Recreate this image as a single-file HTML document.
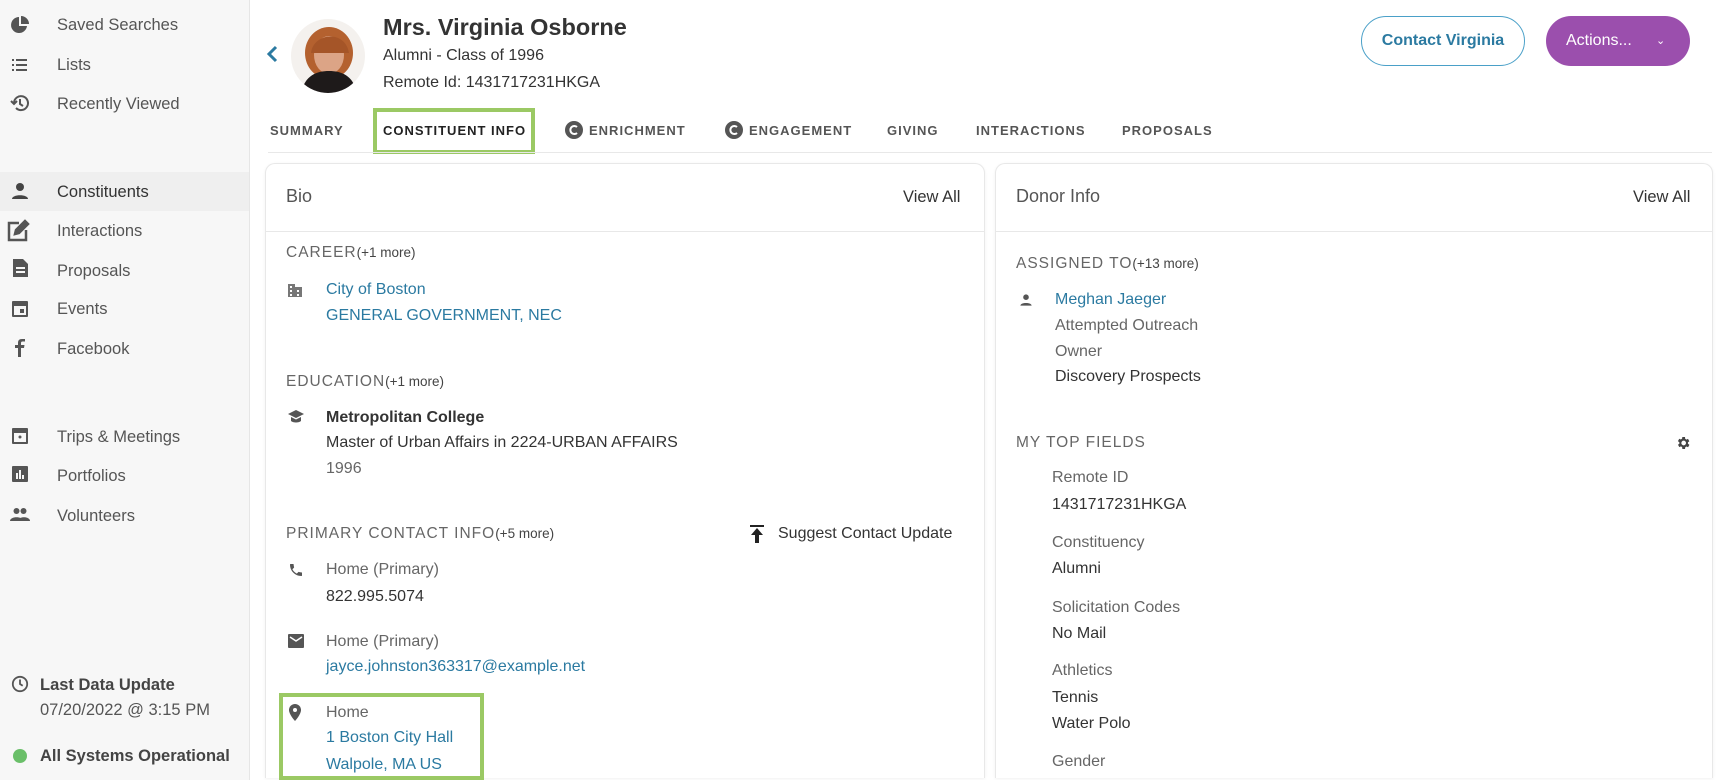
<!DOCTYPE html>
<html><head><meta charset="utf-8"><style>
*{margin:0;padding:0;box-sizing:border-box}
html,body{width:1720px;height:780px;overflow:hidden}
body{background:#fff;font-family:"Liberation Sans",Arial,sans-serif;color:#333;position:relative}
.a{position:absolute;white-space:nowrap;line-height:22px}
.side{position:absolute;left:0;top:0;width:250px;height:780px;background:#f7f7f7;border-right:1px solid #e6e6e6}
.si{font-size:16.5px;color:#555;left:57px}
.ic{position:absolute;left:10px;width:20px;height:20px}
.tab{font-size:13px;font-weight:bold;letter-spacing:1px;color:#555;top:120px}
.card{position:absolute;top:163px;height:615px;background:#fff;border:1px solid #e8e8e8;border-bottom:none;border-radius:10px 10px 0 0;box-shadow:0 1px 3px rgba(0,0,0,.06)}
.ch{position:absolute;left:0;right:0;top:67px;border-top:1px solid #e8e8e8}
.lab{font-size:15.5px;letter-spacing:1px;color:#666}
.lab small{font-size:13.5px;letter-spacing:0;color:#444}
.t{font-size:16px;color:#333}
.g{font-size:16px;color:#666}
.l{font-size:16px;color:#2b7aa1}
.green{position:absolute;border:4px solid #9bc964}
</style></head><body>
<div class="side">
<div style="position:absolute;left:0;top:172px;width:249px;height:39px;background:#efefef"></div>
</div>
<svg class="ic" style="top:15px;left:10px" viewBox="0 0 20 20"><path d="M9 2a8 8 0 1 0 8 9H9z" fill="#555"/><path d="M11 1v8h8a8 8 0 0 0-8-8z" fill="#555"/></svg>
<div class="a si" style="top:14px">Saved Searches</div>
<svg class="ic" style="top:55px" viewBox="0 0 20 20" fill="#555"><rect x="2" y="4" width="2" height="2"/><rect x="2" y="9" width="2" height="2"/><rect x="2" y="14" width="2" height="2"/><rect x="6" y="4" width="11" height="2"/><rect x="6" y="9" width="11" height="2"/><rect x="6" y="14" width="11" height="2"/></svg>
<div class="a si" style="top:54px">Lists</div>
<svg class="ic" style="top:93px" viewBox="0 0 20 20" fill="none" stroke="#555" stroke-width="2"><path d="M4 10a7 7 0 1 1 2 5"/><path d="M10 6v5l3 2"/><path d="M1 8l3 3 3-3"/></svg>
<div class="a si" style="top:93px">Recently Viewed</div>
<svg class="ic" style="top:181px" viewBox="0 0 20 20" fill="#444"><circle cx="10" cy="6" r="4"/><path d="M2 18c0-5 16-5 16 0z"/></svg>
<div class="a si" style="top:181px;color:#333">Constituents</div>
<svg class="ic" style="top:219px;width:24px;height:24px;left:6px" viewBox="0 0 24 24" fill="none" stroke="#555" stroke-width="2.5"><path d="M13 4H3v17h17V11"/><path d="M9 15l1-4 9-9 3 3-9 9z" fill="#555"/></svg>
<div class="a si" style="top:220px">Interactions</div>
<svg class="ic" style="top:258px" viewBox="0 0 20 20"><path d="M3 1h10l5 5v13H3z" fill="#555"/><rect x="6" y="9" width="9" height="2" fill="#f7f7f7"/><rect x="6" y="13" width="9" height="2" fill="#f7f7f7"/></svg>
<div class="a si" style="top:260px">Proposals</div>
<svg class="ic" style="top:298px" viewBox="0 0 20 20"><rect x="2" y="3" width="16" height="16" rx="1" fill="#555"/><rect x="4" y="8" width="12" height="9" fill="#f7f7f7"/><rect x="10" y="11" width="4" height="4" fill="#555"/></svg>
<div class="a si" style="top:298px">Events</div>
<svg class="ic" style="top:337px" viewBox="0 0 20 20"><path d="M11 20V11h3l.5-3H11V6c0-1 .5-1.5 1.5-1.5H15V2h-3c-3 0-4 1.5-4 4V8H5v3h3v9z" fill="#555"/></svg>
<div class="a si" style="top:338px">Facebook</div>
<svg class="ic" style="top:425px" viewBox="0 0 20 20"><rect x="2" y="3" width="16" height="16" rx="1" fill="#555"/><rect x="4" y="8" width="12" height="9" fill="#f7f7f7"/><circle cx="10" cy="12" r="1.5" fill="#555"/></svg>
<div class="a si" style="top:426px">Trips &amp; Meetings</div>
<svg class="ic" style="top:464px" viewBox="0 0 20 20"><rect x="2" y="2" width="16" height="16" rx="1" fill="#555"/><rect x="6" y="9" width="2" height="6" fill="#f7f7f7"/><rect x="9" y="6" width="2" height="9" fill="#f7f7f7"/><rect x="12" y="11" width="2" height="4" fill="#f7f7f7"/></svg>
<div class="a si" style="top:465px">Portfolios</div>
<svg class="ic" style="top:505px" viewBox="0 0 20 20" fill="#555"><circle cx="6.5" cy="6" r="3"/><circle cx="13.5" cy="6" r="3"/><path d="M0 16c0-5 13-5 13 0z"/><path d="M8 16c0-5 12-5 12 0z"/></svg>
<div class="a si" style="top:505px">Volunteers</div>
<svg class="ic" style="top:675px;left:11px;width:18px;height:18px" viewBox="0 0 20 20" fill="none" stroke="#555" stroke-width="2"><circle cx="10" cy="10" r="8"/><path d="M10 5v5l3 2"/></svg>
<div class="a" style="top:674px;left:40px;font-size:16.5px;font-weight:bold;color:#444">Last Data Update</div>
<div class="a" style="top:699px;left:40px;font-size:16.5px;color:#555">07/20/2022 @ 3:15 PM</div>
<div style="position:absolute;left:13px;top:749px;width:14px;height:14px;border-radius:50%;background:#6abf69"></div>
<div class="a" style="top:745px;left:40px;font-size:16.5px;font-weight:bold;color:#444">All Systems Operational</div>

<svg style="position:absolute;left:265px;top:44px" width="14" height="20" viewBox="0 0 14 20"><path d="M11 3L4 10l7 7" fill="none" stroke="#2b7aa1" stroke-width="3"/></svg>
<svg style="position:absolute;left:291px;top:19px" width="74" height="74" viewBox="0 0 74 74"><defs><clipPath id="c"><circle cx="37" cy="37" r="37"/></clipPath></defs><g clip-path="url(#c)"><rect width="74" height="74" fill="#f4f1ee"/><ellipse cx="38" cy="34" rx="24" ry="26" fill="#b4612f"/><ellipse cx="38" cy="36" rx="15" ry="19" fill="#dca486"/><path d="M10 74c4-18 16-22 28-22s24 4 28 22z" fill="#1e1a1a"/><path d="M20 34c2-20 34-24 38 0" fill="#a55528"/></g></svg>
<div class="a" style="top:13px;left:383px;font-size:23.5px;font-weight:bold;color:#333;line-height:28px">Mrs. Virginia Osborne</div>
<div class="a" style="top:45px;left:383px;font-size:16px;color:#333">Alumni - Class of 1996</div>
<div class="a" style="top:72px;left:383px;font-size:16px;color:#333">Remote Id: 1431717231HKGA</div>
<div style="position:absolute;left:1361px;top:16px;width:164px;height:50px;border:1.5px solid #4aa0c8;border-radius:25px;text-align:center;line-height:47px;font-size:16px;font-weight:bold;color:#2b7aa1">Contact Virginia</div>
<div style="position:absolute;left:1546px;top:16px;width:144px;height:50px;background:#9b4fad;border-radius:25px;line-height:50px;font-size:16px;color:#fff;padding-left:20px">Actions...<span style="position:absolute;left:110px;top:0;font-size:11px">&#8964;</span></div>

<div class="a tab" style="left:270px">SUMMARY</div>
<div class="a tab" style="left:383px;color:#222">CONSTITUENT INFO</div>
<div class="green" style="left:373px;top:108px;width:162px;height:46px"></div>
<svg style="position:absolute;left:564px;top:120px" width="20" height="20" viewBox="0 0 20 20"><circle cx="10" cy="10" r="9" fill="#555"/><path d="M13 7a4 4 0 1 0 0 6" fill="none" stroke="#fff" stroke-width="2"/></svg>
<div class="a tab" style="left:589px">ENRICHMENT</div>
<svg style="position:absolute;left:724px;top:120px" width="20" height="20" viewBox="0 0 20 20"><circle cx="10" cy="10" r="9" fill="#555"/><path d="M13 7a4 4 0 1 0 0 6" fill="none" stroke="#fff" stroke-width="2"/></svg>
<div class="a tab" style="left:749px">ENGAGEMENT</div>
<div class="a tab" style="left:887px">GIVING</div>
<div class="a tab" style="left:976px">INTERACTIONS</div>
<div class="a tab" style="left:1122px">PROPOSALS</div>
<div style="position:absolute;left:268px;right:8px;top:152px;border-top:1px solid #e8e8e8"></div>

<div class="card" style="left:265px;width:720px"><div class="ch"></div></div>
<div class="card" style="left:995px;width:718px"><div class="ch"></div></div>
<div class="a" style="top:185px;left:286px;font-size:18px;color:#555">Bio</div>
<div class="a" style="top:186px;left:903px;font-size:16.5px;color:#333">View All</div>
<div class="a" style="top:185px;left:1016px;font-size:18px;color:#555">Donor Info</div>
<div class="a" style="top:186px;left:1633px;font-size:16.5px;color:#333">View All</div>

<div class="a lab" style="top:242px;left:286px">CAREER<small>(+1 more)</small></div>
<svg style="position:absolute;left:287px;top:282px" width="16" height="16" viewBox="0 0 16 16" fill="#777"><path d="M1 2h7v3h7v10H1z"/><g fill="#fff"><rect x="3" y="4" width="2" height="2"/><rect x="3" y="8" width="2" height="2"/><rect x="3" y="12" width="2" height="2"/><rect x="10" y="8" width="2" height="2"/><rect x="10" y="12" width="2" height="2"/></g></svg>
<div class="a l" style="top:279px;left:326px">City of Boston</div>
<div class="a l" style="top:305px;left:326px">GENERAL GOVERNMENT, NEC</div>
<div class="a lab" style="top:371px;left:286px">EDUCATION<small>(+1 more)</small></div>
<svg style="position:absolute;left:287px;top:409px" width="18" height="16" viewBox="0 0 18 16" fill="#555"><path d="M9 1L1 5l8 4 8-4z"/><path d="M4 8v4c2 2 8 2 10 0V8l-5 2.5z"/></svg>
<div class="a t" style="top:407px;left:326px;font-weight:bold">Metropolitan College</div>
<div class="a t" style="top:432px;left:326px">Master of Urban Affairs in 2224-URBAN AFFAIRS</div>
<div class="a g" style="top:458px;left:326px">1996</div>
<div class="a lab" style="top:523px;left:286px">PRIMARY CONTACT INFO<small>(+5 more)</small></div>
<svg style="position:absolute;left:749px;top:524px" width="16" height="20" viewBox="0 0 16 20" fill="#222"><rect x="1" y="1" width="14" height="2"/><path d="M8 4l-6 7h4v8h4v-8h4z"/></svg>
<div class="a t" style="top:523px;left:778px">Suggest Contact Update</div>
<svg style="position:absolute;left:288px;top:562px" width="16" height="16" viewBox="0 0 24 24" fill="#555"><path d="M6.6 10.8c1.4 2.8 3.8 5.1 6.6 6.6l2.2-2.2c.3-.3.7-.4 1-.2 1.1.4 2.3.6 3.6.6.6 0 1 .4 1 1V20c0 .6-.4 1-1 1C10.6 21 3 13.4 3 4c0-.6.4-1 1-1h3.5c.6 0 1 .4 1 1 0 1.3.2 2.5.6 3.6.1.3 0 .7-.2 1z"/></svg>
<div class="a g" style="top:559px;left:326px">Home (Primary)</div>
<div class="a t" style="top:586px;left:326px">822.995.5074</div>
<svg style="position:absolute;left:288px;top:634px" width="16" height="14" viewBox="0 0 16 14"><rect width="16" height="14" rx="1" fill="#555"/><path d="M2 3l6 4 6-4" fill="none" stroke="#fff" stroke-width="1.5"/></svg>
<div class="a g" style="top:631px;left:326px">Home (Primary)</div>
<div class="a l" style="top:656px;left:326px">jayce.johnston363317@example.net</div>
<svg style="position:absolute;left:289px;top:704px" width="12" height="17" viewBox="0 0 12 17"><path d="M6 0a6 6 0 0 0-6 6c0 4.5 6 11 6 11s6-6.5 6-11a6 6 0 0 0-6-6z" fill="#555"/><circle cx="6" cy="6" r="2" fill="#fff"/></svg>
<div class="a g" style="top:702px;left:326px">Home</div>
<div class="a l" style="top:727px;left:326px">1 Boston City Hall</div>
<div class="a l" style="top:754px;left:326px">Walpole, MA US</div>
<div class="green" style="left:279px;top:693px;width:205px;height:87px"></div>

<div class="a lab" style="top:253px;left:1016px">ASSIGNED TO<small>(+13 more)</small></div>
<svg style="position:absolute;left:1019px;top:293px" width="14" height="14" viewBox="0 0 20 20" fill="#555"><circle cx="10" cy="6" r="4"/><path d="M2 18c0-5 16-5 16 0z"/></svg>
<div class="a l" style="top:289px;left:1055px">Meghan Jaeger</div>
<div class="a g" style="top:315px;left:1055px">Attempted Outreach</div>
<div class="a g" style="top:341px;left:1055px">Owner</div>
<div class="a t" style="top:366px;left:1055px">Discovery Prospects</div>
<div class="a lab" style="top:432px;left:1016px">MY TOP FIELDS</div>
<svg style="position:absolute;left:1675px;top:435px" width="16" height="16" viewBox="0 0 24 24" fill="#444"><path d="M19.4 13a7.5 7.5 0 0 0 0-2l2.1-1.6-2-3.5-2.5 1a7 7 0 0 0-1.7-1L15 3h-4l-.4 2.7a7 7 0 0 0-1.7 1l-2.5-1-2 3.5L6.6 11a7.5 7.5 0 0 0 0 2l-2.1 1.6 2 3.5 2.5-1a7 7 0 0 0 1.7 1L11 21h4l.4-2.7a7 7 0 0 0 1.7-1l2.5 1 2-3.5zM13 15.5a3.5 3.5 0 1 1 0-7 3.5 3.5 0 0 1 0 7z"/></svg>
<div class="a g" style="top:467px;left:1052px">Remote ID</div>
<div class="a t" style="top:494px;left:1052px">1431717231HKGA</div>
<div class="a g" style="top:532px;left:1052px">Constituency</div>
<div class="a t" style="top:558px;left:1052px">Alumni</div>
<div class="a g" style="top:597px;left:1052px">Solicitation Codes</div>
<div class="a t" style="top:623px;left:1052px">No Mail</div>
<div class="a g" style="top:660px;left:1052px">Athletics</div>
<div class="a t" style="top:687px;left:1052px">Tennis</div>
<div class="a t" style="top:713px;left:1052px">Water Polo</div>
<div class="a g" style="top:751px;left:1052px">Gender</div>
</body></html>
